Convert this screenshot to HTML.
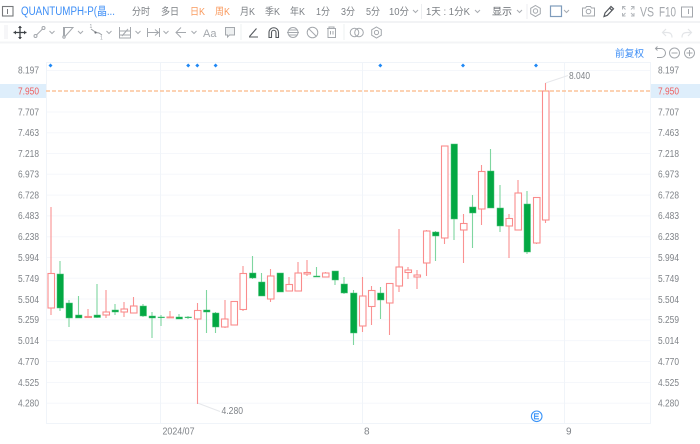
<!DOCTYPE html>
<html>
<head>
<meta charset="utf-8">
<style>
html,body{margin:0;padding:0;background:#fff;width:700px;height:444px;overflow:hidden}
svg{display:block;filter:blur(0.35px)}
text{font-family:"Liberation Sans","Noto Sans CJK SC",sans-serif}
.a{font-size:10px;fill:#7f8388}
.t{font-size:10px;fill:#7d8186}
.ic{fill:none;stroke:#a4a8ad;stroke-width:1}
.dk{fill:none;stroke:#55595e;stroke-width:1.2}
.c{fill:none;stroke:#a8acb1;stroke-width:1}
.r path{stroke:#fa9292;fill:none;stroke-width:1.1}
.r rect{stroke:#fa8c8c;fill:#fff;stroke-width:1.1}
.g path{stroke:#7fd6a0;fill:none;stroke-width:1.1}
.g rect{fill:#03a843;stroke:#4fc47c;stroke-width:.5}
</style>
</head>
<body>
<svg width="700" height="444" viewBox="0 0 700 444" xmlns="http://www.w3.org/2000/svg">
<!-- toolbar separators -->
<rect x="0" y="21" width="700" height="2" fill="#f2f3f5"/>
<rect x="0" y="41.500" width="700" height="2" fill="#f3f4f6"/>

<!-- top row -->
<rect x="2.500" y="6.500" width="10.500" height="9.500" fill="none" stroke="#77797c" stroke-width="1.100"/>
<path d="M7.500 9v5" stroke="#77797c" fill="none"/>
<text x="21" y="15" font-size="11.500" fill="#3d8ef6" textLength="94" lengthAdjust="spacingAndGlyphs">QUANTUMPH-P(晶...</text>
<text class="t" x="132" y="15" textLength="18" lengthAdjust="spacingAndGlyphs">分时</text>
<text class="t" x="161" y="15" textLength="18" lengthAdjust="spacingAndGlyphs">多日</text>
<text class="t" x="190" y="15" style="fill:#f99a5e" textLength="15" lengthAdjust="spacingAndGlyphs">日K</text>
<text class="t" x="215" y="15" style="fill:#f99a5e" textLength="15" lengthAdjust="spacingAndGlyphs">周K</text>
<text class="t" x="240" y="15" textLength="15" lengthAdjust="spacingAndGlyphs">月K</text>
<text class="t" x="265" y="15" textLength="15" lengthAdjust="spacingAndGlyphs">季K</text>
<text class="t" x="290" y="15" textLength="15" lengthAdjust="spacingAndGlyphs">年K</text>
<text class="t" x="316" y="15" textLength="14" lengthAdjust="spacingAndGlyphs">1分</text>
<text class="t" x="341" y="15" textLength="14" lengthAdjust="spacingAndGlyphs">3分</text>
<text class="t" x="366" y="15" textLength="14" lengthAdjust="spacingAndGlyphs">5分</text>
<text class="t" x="389" y="15" textLength="20" lengthAdjust="spacingAndGlyphs">10分</text>
<path class="c" d="M413 10l2.500 2.500 2.500-2.500"/>
<path d="M421.500 4v15" stroke="#eceef0"/>
<text class="t" x="426" y="15" textLength="44" lengthAdjust="spacingAndGlyphs">1天 : 1分K</text>
<path class="c" d="M475 10l2.500 2.500 2.500-2.500"/>
<text class="t" x="492" y="15" style="fill:#666a6f" textLength="20" lengthAdjust="spacingAndGlyphs">显示</text>
<path class="c" d="M517 10l2.500 2.500 2.500-2.500"/>
<path d="M527 4v15" stroke="#eceef0"/>
<!-- gear -->
<path class="ic" d="M535.500 5.500l4.800 2.800v5.400l-4.800 2.800-4.800-2.800V8.300z"/>
<circle class="ic" cx="535.500" cy="11" r="2.200"/>
<rect x="550.500" y="6" width="11" height="10.500" fill="none" stroke="#7f9cbc" stroke-width="1.200"/>
<path class="c" d="M564 10l2.500 2.500 2.500-2.500"/>
<!-- camera -->
<path class="ic" d="M582.500 8h3l1-1.500h4l1 1.500h3v8h-12z"/>
<circle class="ic" cx="588.500" cy="11.500" r="2.300"/>
<!-- pencil -->
<path class="dk" d="M604 16.500l1-3.500 6-6.500 2.500 2.300-6.200 6.500zM609.500 8l2.500 2.300"/>
<!-- expand -->
<path d="M622.500 9.500v-3h3M631 6.500h3v3M634 13v3h-3M625.500 16h-3v-3M623 7l2.500 2.500M633.500 7L631 9.500M633.500 15.500L631 13M623 15.500l2.500-2.500" fill="none" stroke="#b4b8bc" stroke-width="1"/>
<text x="640" y="16.500" font-size="13.500" fill="#a3a7ac" textLength="14" lengthAdjust="spacingAndGlyphs">VS</text>
<text x="659" y="16.500" font-size="13.500" fill="#a3a7ac" textLength="17" lengthAdjust="spacingAndGlyphs">F10</text>
<rect x="681.500" y="7" width="11" height="10" fill="none" stroke="#a3a7ac"/>
<path d="M688.500 9v5" stroke="#a3a7ac"/>

<!-- second row -->
<path d="M4 26h4M4 28h4M4 30h4M4 32h4M4 34h4M4 36h4M4 38h4" stroke="#eceef0"/>
<path d="M20 26v13M13.500 32.500h13" stroke="#3f4347" stroke-width="1.300" fill="none"/>
<path d="M18 28l2-2.200 2 2.200zM18 37l2 2.200 2-2.200zM16 30.500l-2.300 2 2.300 2zM24 30.500l2.300 2-2.300 2z" fill="#3f4347"/>
<!-- line tool -->
<circle class="ic" cx="35.500" cy="36" r="1.500"/><circle class="ic" cx="43.500" cy="28" r="1.500"/>
<path class="ic" d="M36.500 35l6-6"/>
<path class="c" d="M49.500 31l2.500 2.500 2.500-2.500"/>
<!-- polygon -->
<path class="ic" d="M63.500 27.500h9.500l-7.500 8.500h-2zM64.500 27.500v9"/>
<circle class="ic" cx="64" cy="37" r="1.200"/>
<path class="c" d="M78 31l2.500 2.500 2.500-2.500"/>
<!-- polyline -->
<path d="M91 29l5 3.500 3 .5 3 2" fill="none" stroke="#9a9ea3" stroke-width="1"/>
<circle cx="95.500" cy="32.500" r="1.100" fill="#6d7176"/>
<text x="89.500" y="28" font-size="5" fill="#9a9ea3">1</text>
<text x="100" y="39.500" font-size="5" fill="#9a9ea3">1</text>
<path class="c" d="M106.500 31l2.500 2.500 2.500-2.500"/>
<!-- fib box -->
<path class="ic" d="M119.500 27v11h11V27M119.500 31h11M119.500 35h11M122 36l6-7"/>
<path class="c" d="M135.500 31l2.500 2.500 2.500-2.500"/>
<!-- measure -->
<path class="ic" d="M147.500 28v9M159.500 28v9M148 32.500h11M155 29.500l3.500 3-3.500 3"/>
<path class="c" d="M163.500 31l2.500 2.500 2.500-2.500"/>
<!-- arrow -->
<path class="ic" d="M186 32.500h-10M181 27.500l-5 5 5 5"/>
<path class="c" d="M191.500 31l2.500 2.500 2.500-2.500"/>
<text x="203" y="37" font-size="11" fill="#a4a8ad" textLength="13.500" lengthAdjust="spacingAndGlyphs">Aa</text>
<!-- comment -->
<path d="M225.500 27.500h9v7.500h-5l-2 2v-2h-2z" fill="#eef0f1" stroke="#a4a8ad"/>
<path d="M241 24v16" stroke="#eef0f2"/>
<!-- angle -->
<path d="M249 37h9M249.500 36.500l7-8" fill="none" stroke="#55595e" stroke-width="1.100"/>
<!-- magnet -->
<path d="M269 37.500v-5a4.700 4.700 0 0 1 9.500 0v5h-2.500v-5a2.200 2.200 0 0 0-4.500 0v5z" fill="none" stroke="#55595e" stroke-width="1.100"/>
<!-- eye/lines -->
<circle class="ic" cx="293" cy="32.500" r="5"/>
<path class="ic" d="M287 32.500h12M288.500 30h9M288.500 35h9"/>
<!-- no-eye -->
<circle class="ic" cx="312.500" cy="32.500" r="5.300"/>
<path class="ic" d="M308.500 28.500l8 8"/>
<!-- trash -->
<path class="ic" d="M327 28.500h9M329 28.500v-1.500h5v1.500M328 28.500v9h7.500v-9M330.500 31v3.500M333 31v3.500"/>
<path d="M344 24v16" stroke="#eef0f2"/>
<circle class="ic" cx="354.500" cy="32.500" r="4.300"/>
<circle class="ic" cx="359" cy="32.500" r="4.300"/>
<path class="ic" d="M376.500 27l4.800 2.800v5.400l-4.800 2.800-4.800-2.800v-5.400z"/>
<circle class="ic" cx="376.500" cy="32.500" r="2.100"/>
<!-- undo redo -->
<path d="M672 37.500c0-4-2-5-5-5h-4M666 29l-3.500 3.500 3.500 3.500" fill="none" stroke="#e3e5e8" stroke-width="1.200"/>
<path d="M682 37.500c0-4 2-5 5-5h4M688 29l3.500 3.500-3.500 3.500" fill="none" stroke="#e3e5e8" stroke-width="1.200"/>

<!-- chart toolbar -->
<text x="615" y="57" font-size="10" fill="#3d8ef6" textLength="29" lengthAdjust="spacingAndGlyphs">前复权</text>
<path d="M655.500 48.500h5.500a4.500 4.500 0 0 1 0 9h-4M657.500 46.500l-2 2 2 2" fill="none" stroke="#9da1a6" stroke-width="1"/>
<circle class="ic" cx="674.500" cy="53" r="5"/>
<path class="ic" d="M671.500 53h6"/>
<circle class="ic" cx="689.500" cy="53" r="5"/>
<path class="ic" d="M686.500 53h6M689.500 50v6"/>

<!-- grid -->
<g stroke="#f5f7fb" stroke-width="1" fill="none">
<path d="M46.500 70.500H650.500M46.500 112H650.500M46.500 132.800H650.500M46.500 153.500H650.500M46.500 174.300H650.500M46.500 195.100H650.500M46.500 215.900H650.500M46.500 236.700H650.500M46.500 257.500H650.500M46.500 278.200H650.500M46.500 299H650.500M46.500 319.800H650.500M46.500 340.600H650.500M46.500 361.500H650.500M46.500 382.500H650.500M46.500 403.300H650.500"/>
</g>
<path d="M46.500 62.500H650.500V423.500H46.500ZM160.500 62.500V423.500M362.500 62.500V423.500M564.500 62.500V423.500" fill="none" stroke="#f0f4f9"/>
<rect x="651" y="84" width="49" height="14" fill="#deeefb"/>
<rect x="0" y="84" width="46" height="14" fill="#deeefb"/>

<!-- markers -->
<g fill="#1f88f5">
<path d="M50.500 63.500l2 2-2 2-2-2zM188.200 63.500l2 2-2 2-2-2zM197.300 63.500l2 2-2 2-2-2zM215.600 63.500l2 2-2 2-2-2zM380.300 63.500l2 2-2 2-2-2zM463 63.500l2 2-2 2-2-2zM536 63.500l2 2-2 2-2-2z"/>
</g>

<!-- leader lines -->
<path d="M545.500 83L568 75.500M197.500 403L220 411.500" stroke="#e6e8eb" fill="none"/>

<!-- red candles -->
<g class="r">
<path d="M51 207V315M106 290V318M88 309V318M124 302V317M133.500 297V313M170 311V318M197.500 303V404M225 300V328M234 301V325M243 266V311M270.500 269V302M289 277V291M298 262V291M307 260V276M325.500 272V277M362.500 277V332M371.500 286V325M389.500 283V335M399 229V292M408 267V279M417 270V289M426.500 230V276M444.500 146V244M463.500 214V263M481.500 165V225M509 214V258M518 180V230M536.500 197V244M545.500 83V223"/>
<rect x="48" y="273.500" width="6.500" height="34.500"/>
<rect x="103" y="312" width="6.500" height="3"/>
<rect x="85" y="316.500" width="6.500" height="1"/>
<rect x="121" y="309" width="6.500" height="3"/>
<rect x="130.500" y="306" width="6.500" height="7"/>
<rect x="167" y="317" width="6.500" height=".8"/>
<rect x="194.500" y="310.500" width="6.500" height="8.500"/>
<rect x="221.500" y="319" width="6.500" height="8"/>
<rect x="231" y="301.500" width="6.500" height="23.500"/>
<rect x="240" y="273.500" width="6.500" height="36"/>
<rect x="267.500" y="276" width="6.500" height="23"/>
<rect x="286" y="284.500" width="6.500" height="6.500"/>
<rect x="295" y="273" width="6.500" height="18"/>
<rect x="304" y="272.500" width="6.500" height="1.500"/>
<rect x="322.500" y="273" width="6.500" height="4"/>
<rect x="359.500" y="296" width="6.500" height="30"/>
<rect x="368.500" y="290.500" width="6.500" height="16"/>
<rect x="386.500" y="283.500" width="6.500" height="19.500"/>
<rect x="396" y="267" width="6.500" height="19"/>
<rect x="405" y="270" width="6.500" height="2.500"/>
<rect x="414" y="275" width="6.500" height="2"/>
<rect x="423.500" y="231" width="6.500" height="32"/>
<rect x="441.500" y="146" width="6.500" height="92"/>
<rect x="460.500" y="223.500" width="6.500" height="6.500"/>
<rect x="478.500" y="171.500" width="6.500" height="37.500"/>
<rect x="506" y="218.500" width="6.500" height="7.500"/>
<rect x="515" y="193" width="6.500" height="37"/>
<rect x="533.500" y="197.500" width="6.500" height="45.500"/>
<rect x="542.500" y="91" width="6.500" height="129"/>
</g>

<!-- green candles -->
<g class="g">
<path d="M60 261V311M69 300V327M78.500 296V318M97 284V318M115 304V315M143 304V317M152 312V338M161 315V326M179 314V319M188 316V319M206.500 290V333M215.500 312V333M252.500 256V279M261.500 273V296M280 273V292M316.500 267V277M335 271V285M344 277V294M353.500 290V345M380.500 287V319M435.500 231V261M454 144V240M472.500 195V248M490.500 149V208M500 185V232M527 191V254"/>
<rect x="57" y="274" width="6.500" height="34"/>
<rect x="66" y="303" width="6.500" height="15"/>
<rect x="75.500" y="315" width="6.500" height="3"/>
<rect x="94" y="315" width="6.500" height="2.500"/>
<rect x="112" y="310" width="6.500" height="2"/>
<rect x="140" y="306" width="6.500" height="10"/>
<rect x="149" y="316" width="6.500" height="2"/>
<rect x="158" y="317" width="6.500" height=".8"/>
<rect x="176" y="317" width="6.500" height="2"/>
<rect x="185" y="317" width="6.500" height=".8"/>
<rect x="203.500" y="310" width="6.500" height="2"/>
<rect x="212.500" y="313" width="6.500" height="14"/>
<rect x="249.500" y="273" width="6.500" height="5"/>
<rect x="258.500" y="282" width="6.500" height="14"/>
<rect x="277" y="273" width="6.500" height="19"/>
<rect x="313.500" y="276" width="6.500" height="1"/>
<rect x="332" y="271" width="6.500" height="9"/>
<rect x="341" y="284" width="6.500" height="9"/>
<rect x="350.500" y="293" width="6.500" height="40"/>
<rect x="377.500" y="293" width="6.500" height="7"/>
<rect x="432.500" y="232" width="6.500" height="4"/>
<rect x="451" y="144" width="6.500" height="75"/>
<rect x="469.500" y="207" width="6.500" height="6"/>
<rect x="487.500" y="171" width="6.500" height="37"/>
<rect x="497" y="208" width="6.500" height="18"/>
<rect x="524" y="204" width="6.500" height="48"/>
</g>

<!-- dashed price line -->
<path d="M46 91H651" stroke="#fcc39a" stroke-width="1.400" stroke-dasharray="4 2" fill="none"/>

<!-- left axis -->
<g class="a">
<text x="18" y="73.500" textLength="21" lengthAdjust="spacingAndGlyphs">8.197</text>
<text x="18" y="94.500" textLength="21" lengthAdjust="spacingAndGlyphs" style="fill:#ef5f5f">7.950</text>
<text x="18" y="115.500" textLength="21" lengthAdjust="spacingAndGlyphs">7.707</text>
<text x="18" y="136" textLength="21" lengthAdjust="spacingAndGlyphs">7.463</text>
<text x="18" y="157" textLength="21" lengthAdjust="spacingAndGlyphs">7.218</text>
<text x="18" y="177.500" textLength="21" lengthAdjust="spacingAndGlyphs">6.973</text>
<text x="18" y="198.500" textLength="21" lengthAdjust="spacingAndGlyphs">6.728</text>
<text x="18" y="219" textLength="21" lengthAdjust="spacingAndGlyphs">6.483</text>
<text x="18" y="240" textLength="21" lengthAdjust="spacingAndGlyphs">6.238</text>
<text x="18" y="261" textLength="21" lengthAdjust="spacingAndGlyphs">5.994</text>
<text x="18" y="282" textLength="21" lengthAdjust="spacingAndGlyphs">5.749</text>
<text x="18" y="303" textLength="21" lengthAdjust="spacingAndGlyphs">5.504</text>
<text x="18" y="323" textLength="21" lengthAdjust="spacingAndGlyphs">5.259</text>
<text x="18" y="344" textLength="21" lengthAdjust="spacingAndGlyphs">5.014</text>
<text x="18" y="365" textLength="21" lengthAdjust="spacingAndGlyphs">4.770</text>
<text x="18" y="386" textLength="21" lengthAdjust="spacingAndGlyphs">4.525</text>
<text x="18" y="406.500" textLength="21" lengthAdjust="spacingAndGlyphs">4.280</text>
</g>
<!-- right axis -->
<g class="a">
<text x="658" y="73.500" textLength="21" lengthAdjust="spacingAndGlyphs">8.197</text>
<text x="658" y="94.500" textLength="21" lengthAdjust="spacingAndGlyphs" style="fill:#ef5f5f">7.950</text>
<text x="658" y="115.500" textLength="21" lengthAdjust="spacingAndGlyphs">7.707</text>
<text x="658" y="136" textLength="21" lengthAdjust="spacingAndGlyphs">7.463</text>
<text x="658" y="157" textLength="21" lengthAdjust="spacingAndGlyphs">7.218</text>
<text x="658" y="177.500" textLength="21" lengthAdjust="spacingAndGlyphs">6.973</text>
<text x="658" y="198.500" textLength="21" lengthAdjust="spacingAndGlyphs">6.728</text>
<text x="658" y="219" textLength="21" lengthAdjust="spacingAndGlyphs">6.483</text>
<text x="658" y="240" textLength="21" lengthAdjust="spacingAndGlyphs">6.238</text>
<text x="658" y="261" textLength="21" lengthAdjust="spacingAndGlyphs">5.994</text>
<text x="658" y="282" textLength="21" lengthAdjust="spacingAndGlyphs">5.749</text>
<text x="658" y="303" textLength="21" lengthAdjust="spacingAndGlyphs">5.504</text>
<text x="658" y="323" textLength="21" lengthAdjust="spacingAndGlyphs">5.259</text>
<text x="658" y="344" textLength="21" lengthAdjust="spacingAndGlyphs">5.014</text>
<text x="658" y="365" textLength="21" lengthAdjust="spacingAndGlyphs">4.770</text>
<text x="658" y="386" textLength="21" lengthAdjust="spacingAndGlyphs">4.525</text>
<text x="658" y="406.500" textLength="21" lengthAdjust="spacingAndGlyphs">4.280</text>
</g>
<!-- callouts -->
<text class="a" x="569" y="79" textLength="21" lengthAdjust="spacingAndGlyphs">8.040</text>
<text class="a" x="221.500" y="414" textLength="21.500" lengthAdjust="spacingAndGlyphs">4.280</text>
<!-- x axis -->
<text class="a" x="162.500" y="434.500" textLength="32" lengthAdjust="spacingAndGlyphs">2024/07</text>
<text class="a" x="364" y="434.500">8</text>
<text class="a" x="566" y="434.500">9</text>
<!-- E badge -->
<circle cx="536.700" cy="416.300" r="5.300" fill="#fff" stroke="#3d95f8" stroke-width="1.100"/>
<path d="M539 413.800h-4.500v5h4.500M534.500 416.300h4" stroke="#3d95f8" stroke-width="1.100" fill="none"/>
</svg>
</body>
</html>
